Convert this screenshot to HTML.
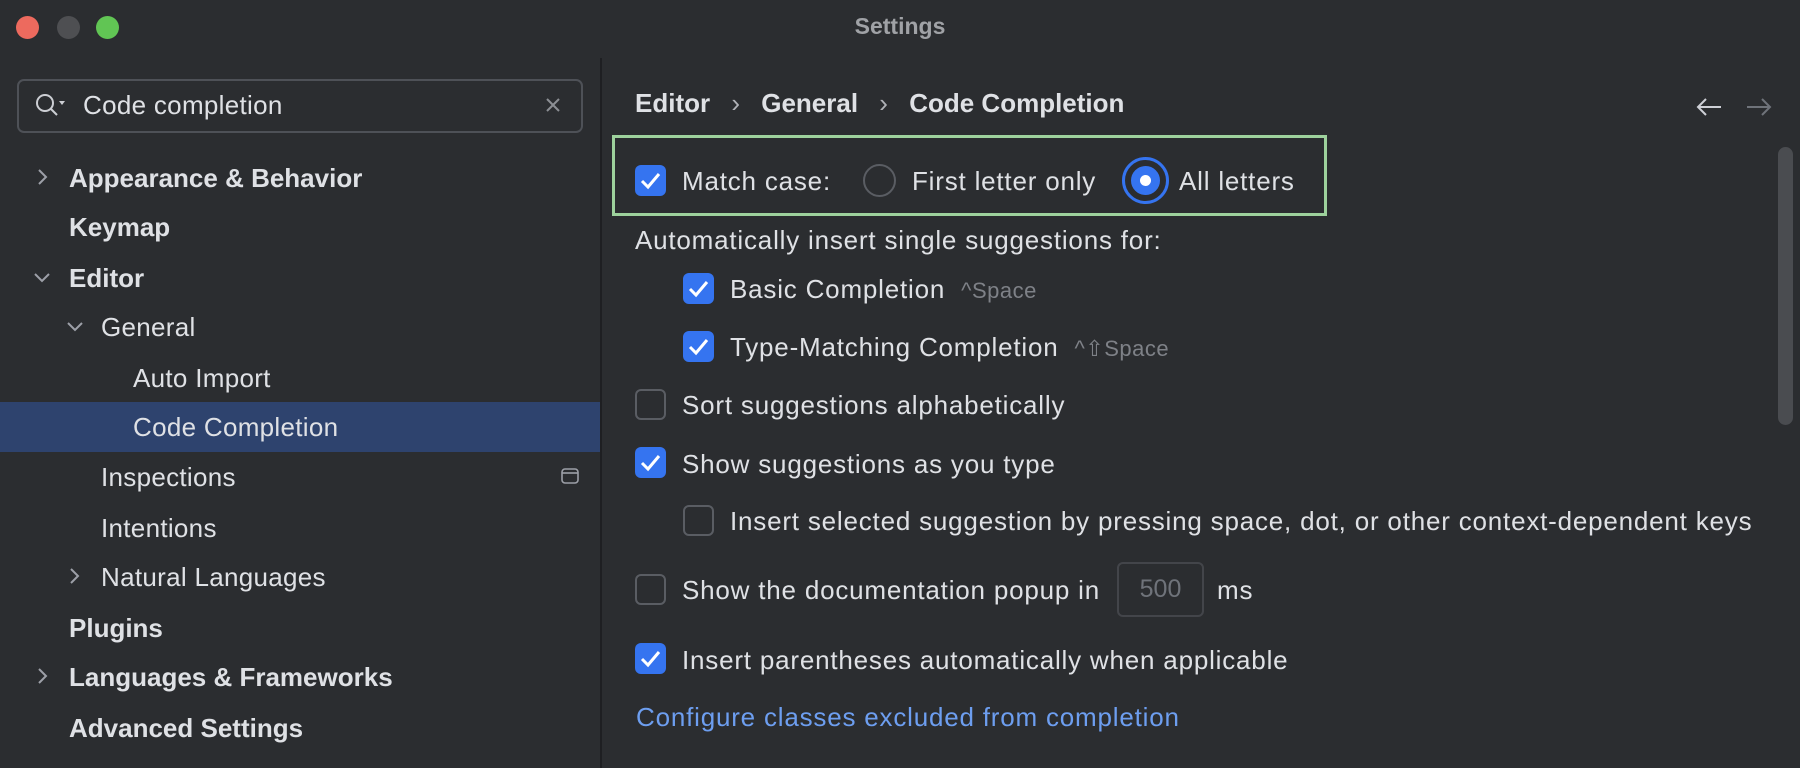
<!DOCTYPE html>
<html><head><meta charset="utf-8"><style>
*{margin:0;padding:0;box-sizing:border-box}
body{width:1800px;height:768px;background:#2b2d30;font-family:"Liberation Sans",sans-serif;color:#dfe1e5;position:relative;overflow:hidden;font-size:25px}
.a{position:absolute;white-space:nowrap;line-height:30px}
.r{font-size:26px;letter-spacing:0.8px}
.dot{position:absolute;width:23px;height:23px;border-radius:50%;top:16px}
.b{font-weight:bold}
.cb{position:absolute;width:31px;height:31px;border-radius:6px;background:#3574f0}
.cb svg{position:absolute;left:5px;top:6px}
.ucb{position:absolute;width:31px;height:31px;border-radius:6px;border:2px solid #5a5d63}
</style></head><body>
<div class="dot" style="left:16px;background:#ed6a5e"></div>
<div class="dot" style="left:57px;background:#4e4f52"></div>
<div class="dot" style="left:96px;background:#61c554"></div>
<div class="a b" style="left:0;width:1800px;text-align:center;top:11px;color:#a0a2a6;font-size:23px">Settings</div>
<div style="position:absolute;left:600px;top:58px;width:2px;height:710px;background:#1e1f22"></div>

<div style="position:absolute;left:17px;top:79px;width:566px;height:54px;border:2px solid #4e5157;border-radius:7px"></div>
<svg style="position:absolute;left:34px;top:92px" width="32" height="28" viewBox="0 0 32 28"><circle cx="11" cy="11" r="8" fill="none" stroke="#ccced3" stroke-width="2"/><line x1="17" y1="17" x2="23" y2="23" stroke="#ccced3" stroke-width="2"/><path d="M25 9h6l-3 4z" fill="#ccced3"/></svg>
<div class="a" style="left:83px;top:90px;font-size:26px;letter-spacing:0.3px">Code completion</div>
<svg style="position:absolute;left:545px;top:97px" width="16" height="16"><path d="M2 2L14 14M14 2L2 14" stroke="#8c8f94" stroke-width="2"/></svg>

<div style="position:absolute;left:0;top:402px;width:600px;height:50px;background:#2e436e"></div>
<svg style="position:absolute;left:36px;top:168px" width="14" height="18"><path d="M3 2l7 7-7 7" fill="none" stroke="#9da0a8" stroke-width="2"/></svg>
<div class="a b" style="left:69px;top:163px;font-size:26px">Appearance &amp; Behavior</div>
<div class="a b" style="left:69px;top:212px;font-size:26px">Keymap</div>
<svg style="position:absolute;left:33px;top:271px" width="18" height="14"><path d="M2 3l7 7 7-7" fill="none" stroke="#9da0a8" stroke-width="2"/></svg>
<div class="a b" style="left:69px;top:263px;font-size:26px">Editor</div>
<svg style="position:absolute;left:66px;top:320px" width="18" height="14"><path d="M2 3l7 7 7-7" fill="none" stroke="#9da0a8" stroke-width="2"/></svg>
<div class="a" style="left:101px;top:312px;font-size:26px;letter-spacing:0.3px">General</div>
<div class="a" style="left:133px;top:363px;font-size:26px;letter-spacing:0.3px">Auto Import</div>
<div class="a" style="left:133px;top:412px;font-size:26px;letter-spacing:0.3px">Code Completion</div>
<div class="a" style="left:101px;top:462px;font-size:26px;letter-spacing:0.3px">Inspections</div>
<svg style="position:absolute;left:561px;top:468px" width="18" height="16"><rect x="1" y="1" width="16" height="14" rx="3" fill="none" stroke="#9da0a8" stroke-width="1.6"/><line x1="1" y1="5" x2="17" y2="5" stroke="#9da0a8" stroke-width="1.6"/></svg>
<div class="a" style="left:101px;top:513px;font-size:26px;letter-spacing:0.3px">Intentions</div>
<svg style="position:absolute;left:68px;top:567px" width="14" height="18"><path d="M3 2l7 7-7 7" fill="none" stroke="#9da0a8" stroke-width="2"/></svg>
<div class="a" style="left:101px;top:562px;font-size:26px;letter-spacing:0.3px">Natural Languages</div>
<div class="a b" style="left:69px;top:613px;font-size:26px">Plugins</div>
<svg style="position:absolute;left:36px;top:667px" width="14" height="18"><path d="M3 2l7 7-7 7" fill="none" stroke="#9da0a8" stroke-width="2"/></svg>
<div class="a b" style="left:69px;top:662px;font-size:26px">Languages &amp; Frameworks</div>
<div class="a b" style="left:69px;top:713px;font-size:26px">Advanced Settings</div>

<div class="a b" style="left:635px;top:88px;font-size:26px">Editor <span style="font-weight:normal;color:#b0b2b7;margin:0 14px">›</span> General <span style="font-weight:normal;color:#b0b2b7;margin:0 14px">›</span> Code Completion</div>
<svg style="position:absolute;left:1695px;top:96px" width="28" height="22"><path d="M26 11H3M11 3L3 11l8 8" fill="none" stroke="#ced0d6" stroke-width="2"/></svg>
<svg style="position:absolute;left:1745px;top:96px" width="28" height="22"><path d="M2 11h23M17 3l8 8-8 8" fill="none" stroke="#6f737a" stroke-width="2"/></svg>

<div style="position:absolute;left:612px;top:135px;width:715px;height:81px;border:3px solid #9ed29d"></div>
<div class="cb" style="left:635px;top:165px"><svg width="21" height="19"><path d="M2 10l6 6L19 3" fill="none" stroke="#fff" stroke-width="3"/></svg></div>
<div class="a r" style="left:682px;top:166px">Match case:</div>
<div style="position:absolute;left:863px;top:164px;width:33px;height:33px;border-radius:50%;border:2px solid #5a5d63"></div>
<div class="a r" style="left:912px;top:166px">First letter only</div>
<div style="position:absolute;left:1122px;top:157px;width:47px;height:47px;border-radius:50%;border:3px solid #3574f0"></div>
<div style="position:absolute;left:1128px;top:163px;width:35px;height:35px;border-radius:50%;background:#3574f0;border:3px solid #2b2d30"></div>
<div style="position:absolute;left:1140px;top:175px;width:11px;height:11px;border-radius:50%;background:#fff"></div>
<div class="a r" style="left:1179px;top:166px">All letters</div>

<div class="a r" style="left:635px;top:225px">Automatically insert single suggestions for:</div>
<div class="cb" style="left:683px;top:273px"><svg width="21" height="19"><path d="M2 10l6 6L19 3" fill="none" stroke="#fff" stroke-width="3"/></svg></div>
<div class="a r" style="left:730px;top:274px">Basic Completion <span style="color:#7e8187;font-size:22px;margin-left:8px;letter-spacing:0.5px">^Space</span></div>
<div class="cb" style="left:683px;top:331px"><svg width="21" height="19"><path d="M2 10l6 6L19 3" fill="none" stroke="#fff" stroke-width="3"/></svg></div>
<div class="a r" style="left:730px;top:332px">Type-Matching Completion <span style="color:#7e8187;font-size:22px;margin-left:8px;letter-spacing:0.5px">^⇧Space</span></div>
<div class="ucb" style="left:635px;top:389px"></div>
<div class="a r" style="left:682px;top:390px">Sort suggestions alphabetically</div>
<div class="cb" style="left:635px;top:447px"><svg width="21" height="19"><path d="M2 10l6 6L19 3" fill="none" stroke="#fff" stroke-width="3"/></svg></div>
<div class="a r" style="left:682px;top:449px">Show suggestions as you type</div>
<div class="ucb" style="left:683px;top:505px"></div>
<div class="a r" style="left:730px;top:506px">Insert selected suggestion by pressing space, dot, or other context-dependent keys</div>
<div class="ucb" style="left:635px;top:574px"></div>
<div class="a r" style="left:682px;top:575px">Show the documentation popup in</div>
<div style="position:absolute;left:1117px;top:562px;width:87px;height:55px;border:2px solid #43454a;border-radius:6px;color:#6f737a;text-align:center;line-height:51px">500</div>
<div class="a r" style="left:1217px;top:575px">ms</div>
<div class="cb" style="left:635px;top:643px"><svg width="21" height="19"><path d="M2 10l6 6L19 3" fill="none" stroke="#fff" stroke-width="3"/></svg></div>
<div class="a r" style="left:682px;top:645px">Insert parentheses automatically when applicable</div>
<div class="a r" style="left:636px;top:702px;color:#6d9ef0">Configure classes excluded from completion</div>

<div style="position:absolute;left:1778px;top:147px;width:15px;height:278px;border-radius:8px;background:#4a4c50"></div>
</body></html>
